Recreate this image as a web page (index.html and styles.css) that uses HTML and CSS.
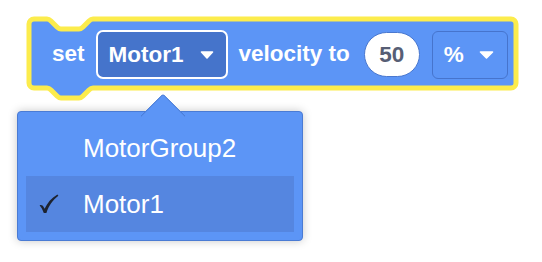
FILE: index.html
```html
<!DOCTYPE html>
<html>
<head>
<meta charset="utf-8">
<link rel="stylesheet" href="styles.css">
</head>
<body>
<div class="stage">
  <div class="block">
    <svg class="block-shape" width="487" height="69" viewBox="0 0 487 69">
      <path d="M0,5 A5,5 0 0 1 5,0 H18 c2,0 3,1 4,2 l6,6 c1,1 2,2 4,2 h18 c2,0 3,-1 4,-2 l6,-6 c1,-1 2,-2 4,-2 H482 a5,5 0 0 1 5,5 V64 a5,5 0 0 1 -5,5 H64 c-2,0 -3,1 -4,2 l-6,6 c-1,1 -2,2 -4,2 h-18 c-2,0 -3,-1 -4,-2 l-6,-6 c-1,-1 -2,-2 -4,-2 H5 a5,5 0 0 1 -5,-5 Z" fill="#5c95f6" stroke="#fcec4c" stroke-width="5" stroke-linejoin="round"/>
    </svg>
    <span class="label label-set">set</span>
    <div class="dropdown dropdown-motor">
      <span class="dd-text">Motor1</span>
      <svg class="caret" width="14" height="8" viewBox="0 0 14 8"><path d="M1.5,1 L12.5,1 L7,7 Z" fill="#fff" stroke="#fff" stroke-width="1.6" stroke-linejoin="round"/></svg>
    </div>
    <span class="label label-velocity">velocity to</span>
    <div class="number">50</div>
    <div class="dropdown dropdown-unit">
      <span class="dd-text">%</span>
      <svg class="caret" width="15" height="8" viewBox="0 0 15 8"><path d="M1.5,1 L13.5,1 L7.5,7 Z" fill="#fff" stroke="#fff" stroke-width="1.6" stroke-linejoin="round"/></svg>
    </div>
  </div>

  <div class="menu">
    <div class="menu-arrow"></div>
    <div class="menu-item">
      <span class="check-cell"></span>
      <span class="item-text">MotorGroup2</span>
    </div>
    <div class="menu-item selected">
      <span class="check-cell">
        <svg class="check" width="20" height="20" viewBox="0 0 20 20"><path d="M0.6,11.4 C2.4,10.6 3.6,11.4 4.6,13 L5.6,14.8 C8.2,8.8 12.2,4.2 18.4,0.4 L19.4,1.8 C13.6,6.4 9.8,11.6 7.4,19 L4.8,19 C3.4,15.2 2,12.6 0.6,11.4 Z" fill="#1d2330"/></svg>
      </span>
      <span class="item-text">Motor1</span>
    </div>
  </div>
</div>
</body>
</html>
```

FILE: styles.css
```css
html, body {
  margin: 0;
  padding: 0;
  background: #ffffff;
}

.stage {
  position: relative;
  width: 542px;
  height: 262px;
  padding: 19px 0 0 29px;
  box-sizing: border-box;
  font-family: "Liberation Sans", Arial, sans-serif;
  overflow: hidden;
}

.block {
  position: relative;
  width: 487px;
  height: 69px;
  display: flex;
  align-items: center;
  padding-left: 23px;
  box-sizing: border-box;
}

.block-shape {
  position: absolute;
  left: 0;
  top: 0;
  overflow: visible;
  z-index: 0;
}

.label,
.dropdown,
.number {
  position: relative;
  z-index: 1;
}

.label {
  color: #ffffff;
  font-weight: bold;
  font-size: 22.5px;
  line-height: 26px;
  white-space: nowrap;
}

.label-velocity {
  margin-left: 11px;
}

.dropdown {
  display: flex;
  align-items: center;
  justify-content: space-between;
  box-sizing: border-box;
  color: #ffffff;
  font-weight: bold;
  font-size: 22.5px;
}

.dropdown-motor {
  margin-left: 11px;
  width: 132px;
  height: 49px;
  margin-top: 2px;
  border: 2px solid #ffffff;
  border-radius: 7px;
  background: #4574cb;
  padding: 0 12px 0 11px;
}

.dropdown-unit {
  margin-left: 12px;
  width: 76px;
  height: 48px;
  margin-top: 2px;
  border: 1px solid #4674cd;
  border-radius: 6px;
  background: #5c95f6;
  padding: 0 13px 0 11px;
}

.caret {
  display: block;
  margin-top: 1px;
}

.number {
  margin-left: 14px;
  width: 56px;
  height: 45px;
  margin-top: 2px;
  box-sizing: border-box;
  border: 1px solid #4a78cf;
  border-radius: 23px;
  background: #ffffff;
  color: #575e75;
  font-weight: bold;
  font-size: 22.5px;
  display: flex;
  align-items: center;
  justify-content: center;
}

.menu {
  position: absolute;
  left: 17px;
  top: 111px;
  width: 286px;
  height: 130px;
  box-sizing: border-box;
  background: #5c95f6;
  border: 1px solid #4a7bd4;
  border-radius: 4px;
  box-shadow: 0 0 10px rgba(0, 0, 0, 0.22);
  padding: 8px;
  z-index: 2;
}

.menu-arrow {
  position: absolute;
  left: 129px;
  top: -12px;
  width: 32px;
  height: 32px;
  box-sizing: border-box;
  background: #5c95f6;
  border-top: 1px solid #4a7bd4;
  border-left: 1px solid #4a7bd4;
  border-top-left-radius: 3px;
  transform: rotate(45deg);
}

.menu-item {
  position: relative;
  display: flex;
  align-items: center;
  height: 56px;
  padding-left: 13px;
  color: #ffffff;
  font-size: 26px;
}

.menu-item.selected {
  background: #5586e0;
}

.check-cell {
  width: 44px;
  height: 20px;
  display: flex;
  align-items: center;
}

.check {
  display: block;
}

.item-text {
  white-space: nowrap;
}
```
